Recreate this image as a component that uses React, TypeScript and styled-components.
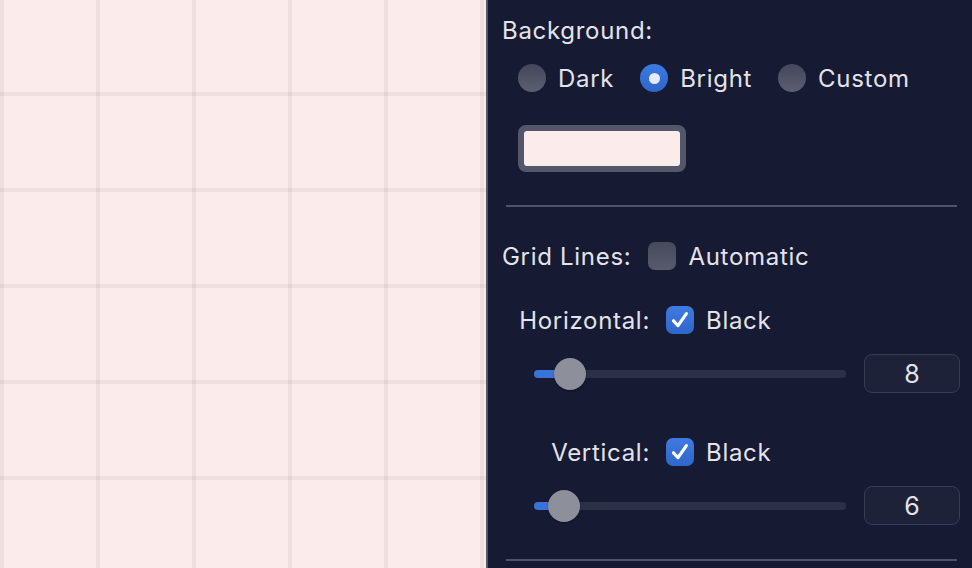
import React from 'react';
import styled, { createGlobalStyle } from 'styled-components';

const GlobalStyle = createGlobalStyle`
  html, body {
    margin: 0;
    padding: 0;
    background: #161a33;
  }
  body {
    font-family: Inter, "Noto Sans", "Liberation Sans", sans-serif;
    -webkit-font-smoothing: antialiased;
  }
`;

const Layout = styled.div`
  display: flex;
  width: 972px;
  height: 568px;
  overflow: hidden;
`;

const Canvas = styled.div<{ $bg: string; $line: string }>`
  width: 486px;
  flex-shrink: 0;
  background-color: ${(p) => p.$bg};
  background-image:
    linear-gradient(to right, ${(p) => p.$line} 0 4px, transparent 4px),
    linear-gradient(to bottom, ${(p) => p.$line} 0 4px, transparent 4px);
  background-size: 96px 96px, 96px 96px;
  background-position: 0 0, 0 92px;
`;

const Panel = styled.div`
  flex: 1;
  display: flex;
  flex-direction: column;
  padding: 0 12px 0 14px;
  border-left: 2px solid #53576c;
  background: #161a33;
  color: #e3e3ea;
  font-size: 24px;
  letter-spacing: 0.7px;
`;

const SectionLabel = styled.div`
  margin-top: 16px;
  line-height: 30px;
  height: 30px;
`;

const Row = styled.div<{ $top: number; $indent?: number }>`
  display: flex;
  align-items: center;
  height: 28px;
  margin-top: ${(p) => p.$top}px;
  margin-left: ${(p) => p.$indent ?? 0}px;
`;

const RadioOption = styled.label`
  display: flex;
  align-items: center;
  gap: 12px;
  margin-right: 26px;
`;

const RadioDot = styled.span<{ $on?: boolean }>`
  width: 28px;
  height: 28px;
  border-radius: 50%;
  box-sizing: border-box;
  display: flex;
  align-items: center;
  justify-content: center;
  background: ${(p) =>
    p.$on ? 'linear-gradient(#3d7ae0, #2f66c9)' : 'linear-gradient(#44475a, #5c5f72)'};
  &::after {
    content: '';
    display: ${(p) => (p.$on ? 'block' : 'none')};
    width: 11px;
    height: 11px;
    border-radius: 50%;
    background: #e4ecf9;
  }
`;

const Swatch = styled.div<{ $color: string }>`
  margin: 33px 0 0 16px;
  width: 168px;
  height: 47px;
  box-sizing: border-box;
  border: 6px solid #54576a;
  border-radius: 8px;
  background: #54576a;
  &::before {
    content: '';
    display: block;
    height: 100%;
    border-radius: 3px;
    background: ${(p) => p.$color};
  }
`;

const Divider = styled.div<{ $top: number }>`
  margin: ${(p) => p.$top}px 0 0 4px;
  width: 451px;
  height: 2px;
  background: #4f5369;
`;

const Label = styled.span<{ $width?: number; $gap?: number }>`
  display: inline-block;
  width: ${(p) => (p.$width ? `${p.$width}px` : 'auto')};
  text-align: right;
  margin-right: ${(p) => p.$gap ?? 16}px;
  white-space: nowrap;
`;

const Check = styled.span<{ $on?: boolean }>`
  width: 28px;
  height: 28px;
  flex-shrink: 0;
  border-radius: 7px;
  margin-right: 12px;
  display: flex;
  align-items: center;
  justify-content: center;
  background: ${(p) =>
    p.$on ? 'linear-gradient(#3f7be2, #2f66ca)' : 'linear-gradient(#474a5d, #585b6e)'};
`;

const SliderRow = styled.div`
  display: flex;
  align-items: center;
  margin-top: 20px;
  gap: 18px;
`;

const Track = styled.div`
  position: relative;
  margin-left: 32px;
  width: 312px;
  height: 8px;
  border-radius: 4px;
  background: #2c3047;
`;

const Fill = styled.div`
  height: 100%;
  border-radius: 4px;
  background: #3874d8;
`;

const Thumb = styled.div`
  position: absolute;
  top: 50%;
  width: 32px;
  height: 32px;
  margin-top: -16px;
  border-radius: 50%;
  background: #8d8f9b;
  box-shadow: 0 1px 2px rgba(0, 0, 0, 0.35);
`;

const NumberBox = styled.div`
  width: 96px;
  height: 39px;
  box-sizing: border-box;
  border: 1px solid #393d53;
  border-radius: 8px;
  background: #1e2239;
  display: flex;
  align-items: center;
  justify-content: center;
  font-size: 25px;
  letter-spacing: 0;
`;

const CheckMark = () => (
  <svg width="22" height="22" viewBox="0 0 22 22">
    <path
      d="M4.5 11.8 L9 16.6 L17.4 4.6"
      fill="none"
      stroke="#ffffff"
      strokeWidth="3.2"
      strokeLinecap="round"
      strokeLinejoin="round"
    />
  </svg>
);

const MIN = 1;
const MAX = 100;

const Slider = ({ value }: { value: number }) => {
  const frac = (value - MIN) / (MAX - MIN);
  const left = frac * (312 - 32);
  return (
    <SliderRow>
      <Track>
        <Fill style={{ width: left + 16 }} />
        <Thumb style={{ left }} />
      </Track>
      <NumberBox>{value}</NumberBox>
    </SliderRow>
  );
};

const backgrounds = [
  { name: 'Dark', on: false },
  { name: 'Bright', on: true },
  { name: 'Custom', on: false },
];

const App = () => {
  return (
    <Layout>
      <GlobalStyle />
      <Canvas $bg="#fbeceb" $line="rgba(95, 60, 66, 0.075)" />
      <Panel>
        <SectionLabel>Background:</SectionLabel>
        <Row $top={18} $indent={16}>
          {backgrounds.map((b) => (
            <RadioOption key={b.name}>
              <RadioDot $on={b.on} />
              {b.name}
            </RadioOption>
          ))}
        </Row>
        <Swatch $color="#fbeceb" />
        <Divider $top={33} />

        <Row $top={35}>
          <Label $gap={17}>Grid Lines:</Label>
          <Check />
          Automatic
        </Row>

        <Row $top={36} $indent={16}>
          <Label $width={132}>Horizontal:</Label>
          <Check $on>
            <CheckMark />
          </Check>
          Black
        </Row>
        <Slider value={8} />

        <Row $top={45} $indent={16}>
          <Label $width={132}>Vertical:</Label>
          <Check $on>
            <CheckMark />
          </Check>
          Black
        </Row>
        <Slider value={6} />

        <Divider $top={34} />
      </Panel>
    </Layout>
  );
};

export default App;
